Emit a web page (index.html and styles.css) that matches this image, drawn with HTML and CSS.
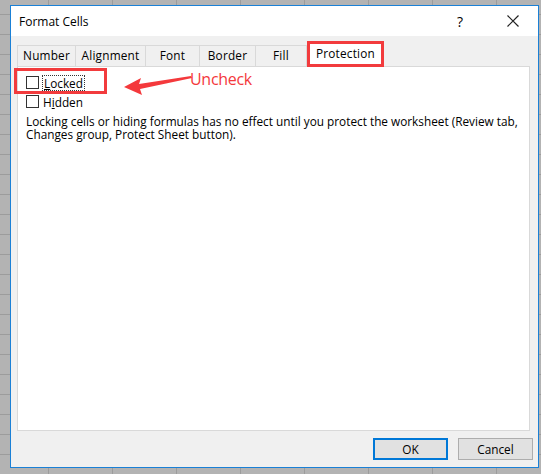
FILE: index.html
```html
<!DOCTYPE html>
<html lang="en">

<head>
    <meta charset="UTF-8">
    <meta name="viewport" content="width=device-width, initial-scale=1.0">
    <title>Format Cells</title>
    <link rel="stylesheet" href="styles.css">
</head>

<body>
    <div class="sheet">
        <div class="dialog">
            <div class="titleBar">
                <span class="title">Format Cells</span>
                <span class="help">?</span>
                <span class="close">
                    <svg width="12" height="12" viewBox="0 0 12 12">
                        <path d="M0.5 0.5 L11.5 11.5 M11.5 0.5 L0.5 11.5" stroke="#222" stroke-width="1.2" fill="none" />
                    </svg>
                </span>
            </div>

            <ul class="tabs">
                <li class="tabNumber">Number</li>
                <li class="tabAlign">Alignment</li>
                <li class="tabFont">Font</li>
                <li class="tabBorder">Border</li>
                <li class="tabFill">Fill</li>
                <li class="tabProtect active">Protection</li>
            </ul>

            <div class="panel">
                <label class="check">
                    <span class="box"></span>
                    <span class="focus"><u>L</u>ocked</span>
                </label>
                <label class="check">
                    <span class="box"></span>
                    <span>H<u>i</u>dden</span>
                </label>
                <p class="note">Locking cells or hiding formulas has no effect until you protect the worksheet (Review tab,
                    Changes group, Protect Sheet button).</p>

                <!-- callout on top of the Locked option -->
                <div class="mark"></div>
                <svg class="arrow" width="70" height="20" viewBox="0 0 70 20">
                    <polygon points="0,12 17,3 15,9 67,1 68,3 16,14 18,20" fill="#f4393c" />
                </svg>
                <span class="hint">Uncheck</span>
            </div>

            <div class="buttons">
                <div class="btn ok">OK</div>
                <div class="btn">Cancel</div>
            </div>
        </div>
    </div>
</body>

</html>
```

FILE: styles.css
```css
* {
    padding: 0;
    margin: 0;
    list-style: none;
    box-sizing: border-box;
}

body {
    width: 541px;
    height: 474px;
    overflow: hidden;
    font-family: "Open Sans", "Noto Sans", sans-serif;
    font-size: 11.8px;
    color: #000;
}

/* excel grid behind the dialog */
.sheet {
    width: 541px;
    height: 474px;
    padding: 5px 0 0 10px;
    background-color: #b3b3b3;
    background-image:
        repeating-linear-gradient(to right, transparent 0, transparent 48px, #9c9c9c 48px, #9c9c9c 49px, transparent 49px, transparent 64px),
        repeating-linear-gradient(to bottom, transparent 0, transparent 14px, #9c9c9c 14px, #9c9c9c 15px, transparent 15px, transparent 20px);
}

.dialog {
    width: 529px;
    height: 463px;
    border: 1px solid #1a80d6;
    background: #f0f0f0;
    display: flex;
    flex-direction: column;
}

.titleBar {
    height: 30px;
    background: #fff;
    display: flex;
    align-items: center;
    padding-left: 8px;
}

.titleBar .title {
    flex: 1;
    font-size: 12px;
}

.titleBar .help {
    font-size: 14px;
    width: 18px;
    margin-right: 32px;
}

.titleBar .close {
    display: flex;
    width: 12px;
    margin-right: 19px;
}

.tabs {
    display: flex;
    height: 23px;
    margin: 7px 0 0 6px;
    align-items: flex-end;
}

.tabs li {
    height: 21px;
    border: 1px solid #d9d9d9;
    border-bottom: none;
    border-left: none;
    text-align: center;
    line-height: 19px;
    letter-spacing: 0.2px;
}

.tabs .tabNumber {
    width: 59px;
    border-left: 1px solid #d9d9d9;
}

.tabs .tabAlign {
    width: 70px;
}

.tabs .tabFont {
    width: 54px;
}

.tabs .tabBorder {
    width: 56px;
}

.tabs .tabFill {
    width: 51px;
}

.tabs .active {
    position: relative;
    width: 77px;
    height: 26px;
    margin-bottom: -1px;
    background: #fff;
    border: 3px solid #f23b3d;
    line-height: 19px;
    z-index: 1;
}

.panel {
    position: relative;
    height: 365px;
    margin: 0 8px 0 6px;
    background: #fff;
    border: 1px solid #d9d9d9;
    padding: 6px 0 0 8px;
}

.check {
    display: flex;
    align-items: center;
    height: 19px;
}

.check .box {
    width: 13px;
    height: 13px;
    border: 1px solid #333;
    margin-right: 4px;
}

.check .focus {
    outline: 1px dotted #333;
    padding: 0 1px;
    line-height: 14px;
}

.note {
    margin-top: 4px;
    line-height: 13px;
}

.mark {
    position: absolute;
    left: -4px;
    top: 1px;
    width: 93px;
    height: 26px;
    border: 3px solid #f23b3d;
}

.arrow {
    position: absolute;
    left: 106px;
    top: 8px;
}

.hint {
    position: absolute;
    left: 172px;
    top: 1px;
    font-size: 16px;
    letter-spacing: -0.3px;
    color: #f4393c;
}

.buttons {
    display: flex;
    justify-content: flex-end;
    gap: 10px;
    padding: 7px 5px 0 0;
}

.btn {
    width: 75px;
    height: 22px;
    border: 1px solid #adadad;
    background: #e1e1e1;
    text-align: center;
    line-height: 20px;
}

.btn.ok {
    border: 2px solid #0078d7;
    line-height: 18px;
}
```
